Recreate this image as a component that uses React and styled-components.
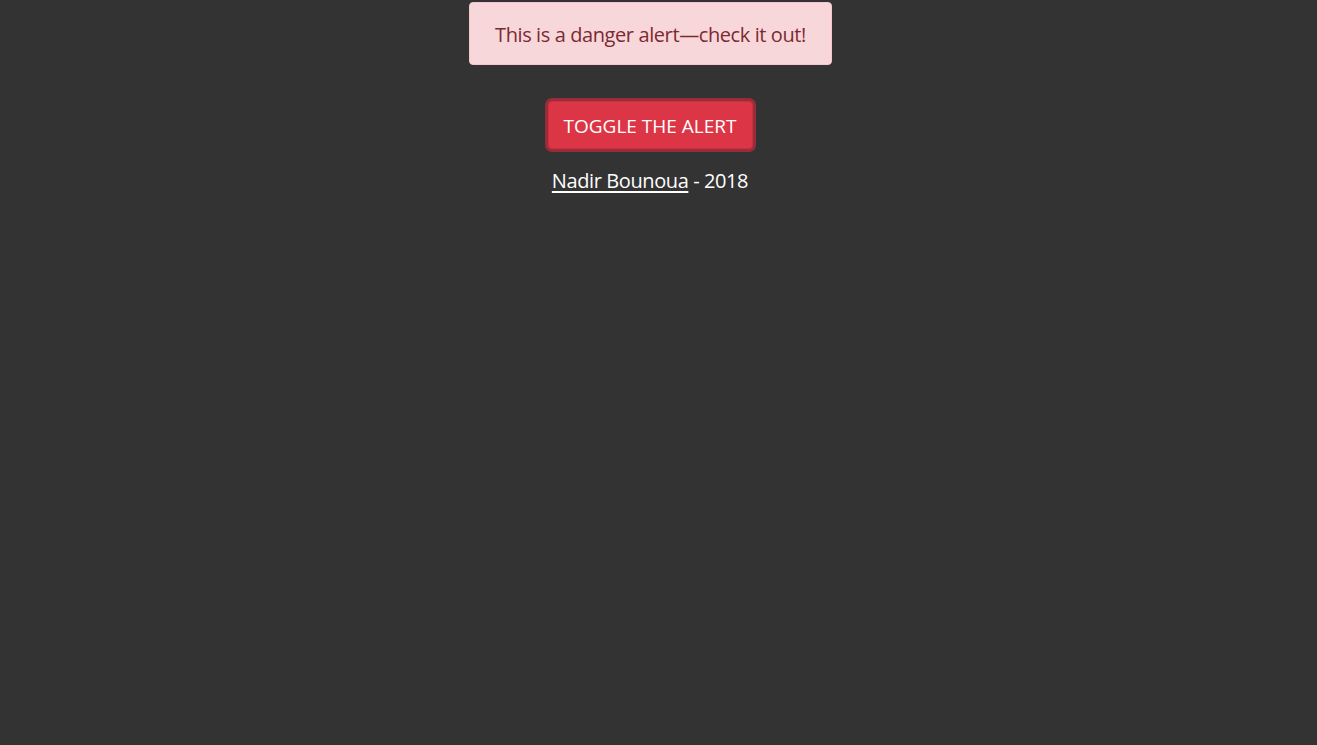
import React, { useState } from "react";
import styled, { createGlobalStyle } from "styled-components";

const Global = createGlobalStyle`
  html, body { margin: 0; padding: 0; background: #333333; }
  body { font-family: "Open Sans", "Noto Sans", sans-serif; color: #fff; }
`;

const Page = styled.div`
  min-height: 745px;
  box-sizing: border-box;
  display: flex;
  flex-direction: column;
  align-items: center;
  padding-top: 2px;
  padding-right: 17px;
`;

const Alert = styled.div`
  box-sizing: border-box;
  width: 363px;
  height: 63px;
  display: flex;
  align-items: center;
  justify-content: center;
  background: #f8d7da;
  border: 1px solid #f5c6cb;
  border-radius: 4px;
  color: #7c2a32;
  font-size: 20px;
  letter-spacing: -0.4px;
  padding-top: 2px;
  margin-left: 1px;
  visibility: ${(p) => (p.$show ? "visible" : "hidden")};
`;

const Button = styled.button`
  box-sizing: border-box;
  margin-top: 36px;
  width: 205px;
  height: 48px;
  background: #dc3545;
  border: 1px solid #d02f3f;
  border-radius: 4px;
  color: #fff;
  font-family: "Open Sans", "Noto Sans", sans-serif;
  font-size: 19px;
  letter-spacing: 0;
  text-transform: uppercase;
  box-shadow: 0 0 0 3px #972d3a;
  cursor: pointer;
  outline: none;
  padding: 2px 0 0;
`;

const Footer = styled.p`
  margin: 17px 0 0;
  font-size: 20px;
  letter-spacing: -0.4px;
  line-height: 30px;
  color: #fff;
`;

const Link = styled.a`
  color: #fff;
  text-decoration: underline;
  text-decoration-thickness: 2px;
  text-underline-offset: 3px;
`;

export default function App() {
  const [show, setShow] = useState(true);
  return (
    <>
      <Global />
      <Page>
        <Alert $show={show}>This is a danger alert—check it out!</Alert>
        <Button onClick={() => setShow((s) => !s)}>Toggle the alert</Button>
        <Footer>
          <Link href="#">Nadir Bounoua</Link> - 2018
        </Footer>
      </Page>
    </>
  );
}
